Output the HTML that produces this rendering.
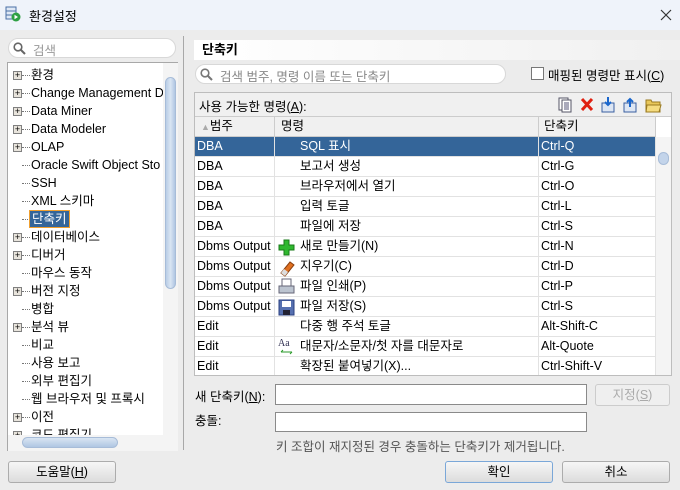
<!DOCTYPE html>
<html><head><meta charset="utf-8"><style>
*{box-sizing:border-box;margin:0;padding:0}
body{width:680px;height:490px;background:#ececec;font-family:"Liberation Sans","Noto Sans CJK KR","NanumGothic",sans-serif;font-size:12px;color:#000;position:relative;overflow:hidden}
.abs{position:absolute}
.title{left:0;top:0;width:680px;height:30px;background:#eff3fa}
.field{background:#fff;border:1px solid #d8d8d8;border-radius:10px}
.tree{left:7px;top:62px;width:171px;height:389px;background:#fff;border:1px solid #a8a8a8}
.tr{position:absolute;left:0;height:18px;line-height:18px;white-space:nowrap;font-size:12.5px}
.pl{position:absolute;left:5px;top:5px;width:9px;height:9px;border:1px solid #808080;background:#e8e4dc;font-size:9px;line-height:7px;text-align:center}
.dot{position:absolute;left:14px;top:9px;width:8px;border-top:1px dotted #777}
.tbl{left:194px;top:92px;width:478px;height:284px;background:#fff;border:1px solid #bdbdbd;overflow:hidden}
.row{position:absolute;left:0;width:461px;height:20px;line-height:19px;border-bottom:1px solid #e2e2e2;font-size:12.5px}
.row span{position:absolute;top:0;height:20px;border-right:1px solid #e2e2e2}
.c1{left:0;width:80px;padding-left:2px}.c2{left:80px;width:264px;padding-left:25px}.c3{left:344px;width:117px;padding-left:2px}
.sel{background:#346599;color:#fff}
.btn{border:1px solid #acacac;border-radius:3px;background:linear-gradient(#f6f6f6,#dcdcdc);text-align:center;line-height:20px;font-size:12.5px}
.inp{background:#fff;border:1px solid #8a8a8a}
</style></head><body>
<div class="abs title">
 <svg class="abs" style="left:5px;top:6px" width="16" height="16"><rect x="1" y="1" width="10" height="12" fill="#dfe8f5" stroke="#4a6fa5"/><line x1="1" y1="5" x2="11" y2="5" stroke="#4a6fa5"/><line x1="1" y1="9" x2="11" y2="9" stroke="#4a6fa5"/><circle cx="11" cy="11" r="4.5" fill="#2ea043"/><path d="M9.5 8.8 L13 11 L9.5 13.2Z" fill="#fff"/></svg>
 <div class="abs" style="left:29px;top:6px;font-size:13px">환경설정</div>
 <svg class="abs" style="left:660px;top:9px" width="12" height="12"><path d="M1 1L11 11M11 1L1 11" stroke="#333" stroke-width="1.2"/></svg>
</div>
<div class="abs field" style="left:8px;top:38px;width:168px;height:20px"></div>
<svg class="abs" style="left:13px;top:42px" width="13" height="13"><circle cx="5" cy="5" r="3.8" fill="none" stroke="#666" stroke-width="1.6"/><path d="M8 8L12 12" stroke="#666" stroke-width="2"/></svg>
<div class="abs" style="left:33px;top:40px;color:#999;font-size:12.5px">검색</div>
<div class="abs tree">
 <div class="tr" style="top:3px"><div class="pl">+</div><div class="dot"></div><span style="position:absolute;left:23px">환경</span></div>
 <div class="tr" style="top:21px"><div class="pl">+</div><div class="dot"></div><span style="position:absolute;left:23px">Change Management D</span></div>
 <div class="tr" style="top:39px"><div class="pl">+</div><div class="dot"></div><span style="position:absolute;left:23px">Data Miner</span></div>
 <div class="tr" style="top:57px"><div class="pl">+</div><div class="dot"></div><span style="position:absolute;left:23px">Data Modeler</span></div>
 <div class="tr" style="top:75px"><div class="pl">+</div><div class="dot"></div><span style="position:absolute;left:23px">OLAP</span></div>
 <div class="tr" style="top:93px"><div class="dot"></div><span style="position:absolute;left:23px">Oracle Swift Object Sto</span></div>
 <div class="tr" style="top:111px"><div class="dot"></div><span style="position:absolute;left:23px">SSH</span></div>
 <div class="tr" style="top:129px"><div class="dot"></div><span style="position:absolute;left:23px">XML 스키마</span></div>
 <div class="tr" style="top:147px"><div class="dot"></div><span style="position:absolute;left:21px;top:0;height:18px;padding:0 2px;background:#346599;color:#fff;border:1px solid #f0a030;line-height:16px">단축키</span></div>
 <div class="tr" style="top:165px"><div class="pl">+</div><div class="dot"></div><span style="position:absolute;left:23px">데이터베이스</span></div>
 <div class="tr" style="top:183px"><div class="pl">+</div><div class="dot"></div><span style="position:absolute;left:23px">디버거</span></div>
 <div class="tr" style="top:201px"><div class="dot"></div><span style="position:absolute;left:23px">마우스 동작</span></div>
 <div class="tr" style="top:219px"><div class="pl">+</div><div class="dot"></div><span style="position:absolute;left:23px">버전 지정</span></div>
 <div class="tr" style="top:237px"><div class="dot"></div><span style="position:absolute;left:23px">병합</span></div>
 <div class="tr" style="top:255px"><div class="pl">+</div><div class="dot"></div><span style="position:absolute;left:23px">분석 뷰</span></div>
 <div class="tr" style="top:273px"><div class="dot"></div><span style="position:absolute;left:23px">비교</span></div>
 <div class="tr" style="top:291px"><div class="dot"></div><span style="position:absolute;left:23px">사용 보고</span></div>
 <div class="tr" style="top:309px"><div class="dot"></div><span style="position:absolute;left:23px">외부 편집기</span></div>
 <div class="tr" style="top:327px"><div class="dot"></div><span style="position:absolute;left:23px">웹 브라우저 및 프록시</span></div>
 <div class="tr" style="top:345px"><div class="pl">+</div><div class="dot"></div><span style="position:absolute;left:23px">이전</span></div>
 <div class="tr" style="top:363px"><div class="pl">+</div><div class="dot"></div><span style="position:absolute;left:23px">코드 편집기</span></div>
 <div class="abs" style="left:155px;top:0;width:15px;height:372px;background:#f4f4f4"></div>
 <div class="abs" style="left:157px;top:14px;width:11px;height:212px;border-radius:6px;background:linear-gradient(90deg,#b9cde6,#d9e5f3,#b0c6e2);border:1px solid #a7bcd8"></div>
 <div class="abs" style="left:0;top:372px;width:170px;height:16px;background:#f4f4f4"></div>
 <div class="abs" style="left:14px;top:374px;width:96px;height:11px;border-radius:6px;background:linear-gradient(#d9e5f3,#b0c6e2);border:1px solid #a7bcd8"></div>
</div>
<div class="abs" style="left:183px;top:36px;width:1px;height:414px;background:#a8a8a8"></div>
<div class="abs" style="left:194px;top:40px;width:486px;height:20px;background:linear-gradient(90deg,#fff,#f0f0f0)"></div>
<div class="abs" style="left:202px;top:40px;font-weight:bold;font-size:13px;line-height:20px">단축키</div>
<div class="abs field" style="left:195px;top:64px;width:311px;height:20px"></div>
<svg class="abs" style="left:200px;top:68px" width="13" height="13"><circle cx="5" cy="5" r="3.8" fill="none" stroke="#777" stroke-width="1.6"/><path d="M8 8L12 12" stroke="#777" stroke-width="2"/></svg>
<div class="abs" style="left:220px;top:66px;color:#888;font-size:12.5px">검색 범주, 명령 이름 또는 단축키</div>
<div class="abs" style="left:531px;top:67px;width:13px;height:13px;border:1px solid #777;background:#fff"></div>
<div class="abs" style="left:548px;top:65px;font-size:12.5px">매핑된 명령만 표시(<u>C</u>)</div>
<div class="abs tbl">
 <div class="abs" style="left:0;top:0;width:478px;height:24px;background:#f0f0f0;border-bottom:1px solid #ccc"></div>
 <div class="abs" style="left:4px;top:3px;font-size:12.5px">사용 가능한 명령(<u>A</u>):</div>
 <svg class="abs" style="left:362px;top:3px" width="110" height="18">
  <rect x="2" y="2" width="9" height="12" fill="#fff" stroke="#556"/><rect x="5" y="4" width="9" height="12" fill="#fff" stroke="#556"/><path d="M7 7h5M7 9h5M7 11h5M7 13h5" stroke="#557"/>
  <path d="M25 3l10 11M35 3L25 14" stroke="#e02010" stroke-width="3"/>
  <rect x="45" y="7" width="12" height="9" fill="#dde6f3" stroke="#3a5fa0"/><path d="M51 1v8M48 6l3 3 3-3" stroke="#1a66cc" stroke-width="2" fill="none"/>
  <rect x="67" y="7" width="12" height="9" fill="#dde6f3" stroke="#3a5fa0"/><path d="M73 11V3M70 6l3-3 3 3" stroke="#1a66cc" stroke-width="2" fill="none"/>
  <path d="M89 4h5l1 2h8v10H89z" fill="#e8c75a" stroke="#9a7a20"/><path d="M90 9h14l-2 7H89z" fill="#f5dc80" stroke="#9a7a20"/>
 </svg>
 <div class="row" style="top:24px;background:#f0f0f0;border-bottom:1px solid #ccc"><span class="c1" style="padding-left:6px;border-color:#ccc"><small style="color:#aaa;font-size:9px">▲</small>범주</span><span class="c2" style="padding-left:6px;border-color:#ccc">명령</span><span class="c3" style="padding-left:5px;border-color:#ccc">단축키</span></div>
 <div class="row sel" style="top:44px"><span class="c1">DBA</span><span class="c2">SQL 표시</span><span class="c3">Ctrl-Q</span></div>
 <div class="row" style="top:64px"><span class="c1">DBA</span><span class="c2">보고서 생성</span><span class="c3">Ctrl-G</span></div>
 <div class="row" style="top:84px"><span class="c1">DBA</span><span class="c2">브라우저에서 열기</span><span class="c3">Ctrl-O</span></div>
 <div class="row" style="top:104px"><span class="c1">DBA</span><span class="c2">입력 토글</span><span class="c3">Ctrl-L</span></div>
 <div class="row" style="top:124px"><span class="c1">DBA</span><span class="c2">파일에 저장</span><span class="c3">Ctrl-S</span></div>
 <div class="row" style="top:144px"><span class="c1">Dbms Output</span><span class="c2">새로 만들기(N)</span><span class="c3">Ctrl-N</span></div>
 <div class="row" style="top:164px"><span class="c1">Dbms Output</span><span class="c2">지우기(C)</span><span class="c3">Ctrl-D</span></div>
 <div class="row" style="top:184px"><span class="c1">Dbms Output</span><span class="c2">파일 인쇄(P)</span><span class="c3">Ctrl-P</span></div>
 <div class="row" style="top:204px"><span class="c1">Dbms Output</span><span class="c2">파일 저장(S)</span><span class="c3">Ctrl-S</span></div>
 <div class="row" style="top:224px"><span class="c1">Edit</span><span class="c2">다중 행 주석 토글</span><span class="c3">Alt-Shift-C</span></div>
 <div class="row" style="top:244px"><span class="c1">Edit</span><span class="c2">대문자/소문자/첫 자를 대문자로</span><span class="c3">Alt-Quote</span></div>
 <div class="row" style="top:264px"><span class="c1">Edit</span><span class="c2">확장된 붙여넣기(X)...</span><span class="c3">Ctrl-Shift-V</span></div>
 <svg class="abs" style="left:83px;top:146px" width="18" height="120">
  <path d="M6 1h5v5h5v5h-5v5H6v-5H1V6h5z" fill="#2fb82f" stroke="#187a18"/>
  <path d="M3 34l9-11 4 3-9 11z" fill="#e07020" stroke="#8a4010"/><path d="M3 34l3-4 4 3-3 4z" fill="#ddd"/>
  <rect x="4" y="40" width="9" height="7" fill="#fff" stroke="#667"/><rect x="1" y="47" width="15" height="7" fill="#bcc4d0" stroke="#667"/>
  <rect x="1" y="61" width="15" height="15" fill="#5670b0" stroke="#2a3f80"/><rect x="4" y="62" width="9" height="6" fill="#fff"/><rect x="5" y="71" width="7" height="5" fill="#223"/>
  <text x="0" y="107" font-size="10" fill="#335" font-family="Liberation Serif">Aa</text>
  <path d="M3 113h11M3 113l2-2M14 113l-2 2" stroke="#2a9a2a" fill="none"/>
 </svg>
 <div class="abs" style="left:461px;top:44px;width:16px;height:240px;background:#f4f4f4"></div>
 <div class="abs" style="left:463px;top:59px;width:11px;height:13px;border-radius:6px;background:#c3d4ea;border:1px solid #a7bcd8"></div>
</div>
<div class="abs" style="left:195px;top:386px;font-size:12.5px">새 단축키(<u>N</u>):</div>
<div class="abs inp" style="left:275px;top:384px;width:312px;height:21px"></div>
<div class="abs btn" style="left:595px;top:384px;width:75px;height:22px;color:#aaa;background:#efefef;border-color:#ccc">지정(<u>S</u>)</div>
<div class="abs" style="left:195px;top:410px;font-size:12.5px">충돌:</div>
<div class="abs inp" style="left:275px;top:412px;width:312px;height:20px"></div>
<div class="abs" style="left:276px;top:436px;color:#555;font-size:12.5px">키 조합이 재지정된 경우 충돌하는 단축키가 제거됩니다.</div>
<div class="abs btn" style="left:8px;top:461px;width:108px;height:22px">도움말(<u>H</u>)</div>
<div class="abs btn" style="left:445px;top:461px;width:108px;height:22px;border-color:#7aa7d8">확인</div>
<div class="abs btn" style="left:562px;top:461px;width:108px;height:22px">취소</div>
</body></html>
